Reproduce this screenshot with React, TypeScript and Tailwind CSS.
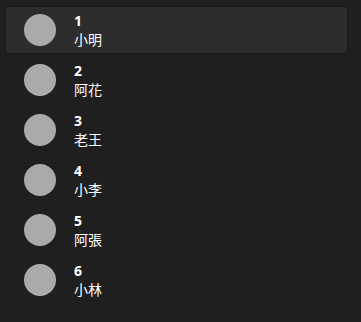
import React from "react";

const people = [
  { id: 1, name: "小明" },
  { id: 2, name: "阿花" },
  { id: 3, name: "老王" },
  { id: 4, name: "小李" },
  { id: 5, name: "阿張" },
  { id: 6, name: "小林" },
];

export default function App() {
  const active = 1;
  return (
    <div
      className="w-[361px] h-[322px] bg-[#1f1f1f] text-white overflow-hidden"
      style={{ fontFamily: '"Open Sans", "Noto Sans CJK TC", sans-serif' }}
    >
      <ul className="flex flex-col gap-[4px] pt-[7px] pl-[6px] pr-[14px]">
        {people.map((p) => (
          <li
            key={p.id}
            className={`flex items-center gap-[18px] h-[46px] px-[18px] rounded-[4px] ${
              p.id === active ? "bg-[#2d2d2d] shadow-[0_0_2px_rgba(0,0,0,0.5)]" : ""
            }`}
          >
            <div className="w-[32px] h-[32px] rounded-full bg-[#aaaaaa] shrink-0" />
            <div className="flex flex-col leading-[19px]">
              <span className="text-[14px] font-bold">{p.id}</span>
              <span className="text-[14px]">{p.name}</span>
            </div>
          </li>
        ))}
      </ul>
    </div>
  );
}
